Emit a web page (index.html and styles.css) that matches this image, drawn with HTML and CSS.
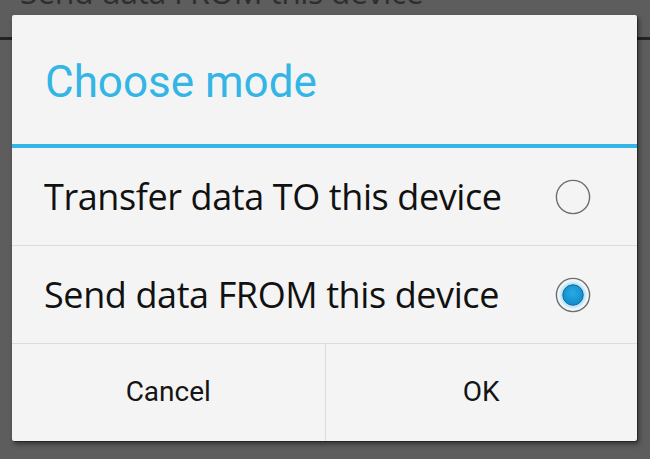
FILE: index.html
```html
<!DOCTYPE html>
<html>
<head>
<meta charset="utf-8">
<link rel="stylesheet" href="styles.css">
</head>
<body>
<div class="screen">
  <div class="bg-list">
    <div class="bg-item">Send data FROM this device</div>
    <div class="bg-divider"></div>
  </div>
  <div class="dialog">
    <div class="dialog-title">Choose mode</div>
    <div class="option">
      <span class="option-label">Transfer data TO this device</span>
      <svg class="radio" width="36" height="36" viewBox="0 0 36 36">
        <circle cx="18" cy="18" r="16.6" fill="none" stroke="#6e6e6e" stroke-width="1.4"/>
      </svg>
    </div>
    <div class="option">
      <span class="option-label">Send data FROM this device</span>
      <svg class="radio" width="36" height="36" viewBox="0 0 36 36">
        <defs>
          <radialGradient id="halo" cx="50%" cy="50%" r="50%">
            <stop offset="0.6" stop-color="#8fd0ee"/>
            <stop offset="1" stop-color="#e6f4fa"/>
          </radialGradient>
          <radialGradient id="dot" cx="50%" cy="40%" r="60%">
            <stop offset="0" stop-color="#2aa9e4"/>
            <stop offset="1" stop-color="#0f8ccb"/>
          </radialGradient>
        </defs>
        <circle cx="18" cy="18" r="16.6" fill="#eef6fa" stroke="#6e6e6e" stroke-width="1.4"/>
        <circle cx="18" cy="18" r="14" fill="url(#halo)"/>
        <circle cx="18" cy="18" r="10.2" fill="url(#dot)" stroke="#0b6a9a" stroke-width="1"/>
      </svg>
    </div>
    <div class="buttons">
      <div class="btn">Cancel</div>
      <div class="btn btn-right">OK</div>
    </div>
  </div>
</div>
</body>
</html>
```

FILE: styles.css
```css
html, body {
  margin: 0;
  padding: 0;
}
body {
  background: #5c5c5c;
  font-family: "Open Sans", "DejaVu Sans", sans-serif;
}
.screen {
  position: relative;
  width: 650px;
  height: 459px;
  overflow: hidden;
  background: #5d5d5d;
}
.bg-list {
  display: flex;
  flex-direction: column;
}
.bg-item {
  margin-top: -30px;
  padding-left: 20px;
  font-size: 32px;
  line-height: 44px;
  letter-spacing: -0.4px;
  color: #2e2e2e;
  white-space: nowrap;
}
.bg-divider {
  margin-top: 23px;
  height: 3px;
  background: #232323;
}
.dialog {
  position: absolute;
  left: 12px;
  top: 15px;
  width: 625px;
  height: 426px;
  background: #f4f4f4;
  border-radius: 2px;
  box-shadow: 1px 1px 0 rgba(0,0,0,0.35), 2px 3px 5px rgba(0,0,0,0.45);
  display: flex;
  flex-direction: column;
}
.dialog-title {
  height: 124px;
  padding-top: 5px;
  padding-left: 33px;
  line-height: 124px;
  font-family: Roboto, "Liberation Sans", sans-serif;
  font-size: 44px;
  color: #33b5e5;
  border-bottom: 4px solid #33b5e5;
}
.option {
  height: 97px;
  display: flex;
  align-items: center;
  justify-content: space-between;
  padding-left: 32px;
  padding-right: 46px;
  border-bottom: 1px solid #dcdcdc;
}
.option:first-of-type {
  height: 98px;
}
.option-label {
  font-size: 36px;
  color: #111;
  letter-spacing: -0.4px;
}
.radio {
  display: block;
}
.buttons {
  flex: 1;
  display: grid;
  grid-template-columns: 1fr 1fr;
}
.btn {
  display: flex;
  align-items: center;
  justify-content: center;
  padding-bottom: 2px;
  font-family: Roboto, "Liberation Sans", sans-serif;
  font-size: 28px;
  color: #151515;
}
.btn-right {
  border-left: 1px solid #dcdcdc;
}
```
